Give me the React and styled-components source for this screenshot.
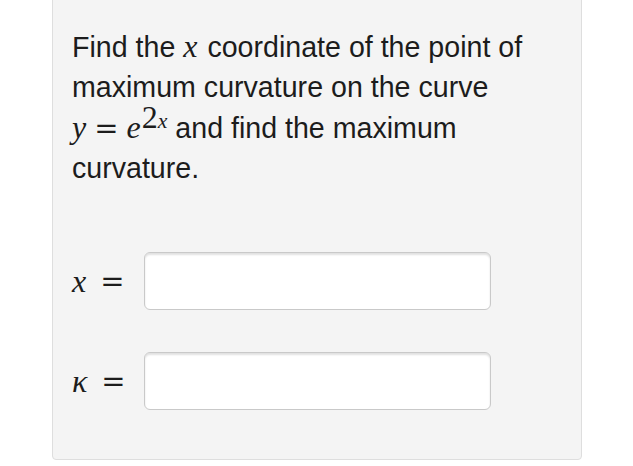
import React from "react";
import styled, { createGlobalStyle } from "styled-components";

const Global = createGlobalStyle`
	body {
		margin: 0;
		background: #fff;
		font-family: "Liberation Sans", Arial, sans-serif;
	}
`;

const Page = styled.div`
	padding: 0 51px 0 52px;
`;

const Card = styled.div`
	margin-top: -6px;
	background: #f4f4f4;
	border: 1px solid #dedede;
	border-radius: 4px;
	padding: 31px 19px 49px 19px;
	width: 490px;
`;

const Prompt = styled.p`
	margin: 0;
	font-size: 28.6px;
	line-height: 40px;
	color: #1c1c1c;
`;

const M = styled.span`
	font-family: "Liberation Serif", "Times New Roman", serif;
	font-style: ${({ upright }) => (upright ? "normal" : "italic")};
	font-size: 32px;
	margin-right: ${({ tail = 0 }) => tail}px;
`;

const Sup = styled.sup`
	font-size: 0.68em;
	line-height: 0;
	vertical-align: 0.48em;
	margin-left: 1px;
`;

const Eq = styled.span`
	font-family: "DejaVu Serif", "Liberation Serif", serif;
	font-size: 29px;
	margin: 0 ${({ gap }) => gap}px;
`;

const Answers = styled.div`
	margin-top: 64px;
	display: flex;
	flex-direction: column;
	gap: 42px;
`;

const Row = styled.div`
	display: flex;
	align-items: center;
`;

const Label = styled.div`
	width: 72px;
	display: flex;
	align-items: center;
	color: #1c1c1c;
`;

const Field = styled.input`
	box-sizing: border-box;
	width: 347px;
	height: 58px;
	border: 1px solid #c9c9c9;
	border-radius: 6px;
	background: #fff;
	box-shadow: inset 0 2px 2px rgba(0, 0, 0, 0.12);
	outline: none;
	font-size: 22px;
	padding: 0 10px;
`;

export default function App() {
	return (
		<Page>
			<Global />
			<Card>
				<Prompt>
					Find the <M tail={2}>x</M> coordinate of the point of maximum
					curvature on the curve{" "}
					<M>y</M>
					<Eq gap={8}>=</Eq>
					<M>
						e
						<Sup>
							<M upright>2</M>x
						</Sup>
					</M>{" "}
					and find the maximum curvature.
				</Prompt>
				<Answers>
					<Row>
						<Label>
							<M>x</M>
							<Eq gap={14}>=</Eq>
						</Label>
						<Field type="text" />
					</Row>
					<Row>
						<Label>
							<M>κ</M>
							<Eq gap={14}>=</Eq>
						</Label>
						<Field type="text" />
					</Row>
				</Answers>
			</Card>
		</Page>
	);
}
